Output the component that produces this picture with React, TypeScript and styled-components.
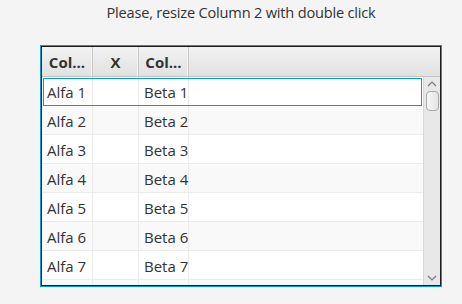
import styled, { createGlobalStyle } from "styled-components";

const Global = createGlobalStyle`
  html, body {
    margin: 0;
    padding: 0;
    background: #f4f4f4;
    font-family: "Open Sans", "Noto Sans", sans-serif;
    color: #333333;
  }
`;

const Page = styled.div`
  width: 462px;
  height: 304px;
  display: flex;
  flex-direction: column;
`;

const Title = styled.div`
  font-size: 14.6px;
  line-height: 20px;
  margin-top: 2px;
  padding-left: 20px;
  text-align: center;
  letter-spacing: -0.2px;
`;

const Table = styled.div`
  margin-top: 24px;
  margin-left: 41px;
  width: 398px;
  height: 238px;
  border: 1px solid #1c1c1c;
  box-shadow: 0 0 0 1px #039ed3;
  background: #ffffff;
  display: flex;
  flex-direction: column;
  overflow: hidden;
`;

const Header = styled.div`
  height: 29px;
  display: flex;
  border-bottom: 1px solid #c4c4c4;
  background: linear-gradient(#f2f2f2, #e1e1e1);
`;

const HeadCell = styled.div<{ $w: number }>`
  width: ${(p) => p.$w}px;
  flex: 0 0 auto;
  box-sizing: border-box;
  border-right: 1px solid #c8c8c8;
  box-shadow: inset -1px 0 0 #f4f4f4;
  display: flex;
  align-items: center;
  justify-content: center;
  font-weight: 700;
  font-size: 15px;
`;

const HeadFiller = styled.div`
  flex: 1;
`;

const Body = styled.div`
  flex: 1;
  display: flex;
  min-height: 0;
`;

const Rows = styled.div`
  width: 381px;
  overflow: hidden;
`;

const Row = styled.div<{ $odd: boolean; $focus: boolean }>`
  height: 28px;
  display: flex;
  position: relative;
  border-bottom: 1px solid #ececec;
  background: ${(p) => (p.$odd ? "#f9f9f9" : "#ffffff")};
  ${(p) =>
    p.$focus &&
    `&::after {
      content: "";
      position: absolute;
      left: 1px;
      top: 1px;
      right: 1px;
      bottom: -1px;
      border: 1px solid #039ed3;
      pointer-events: none;
    }`}
`;

const Cell = styled.div<{ $w: number }>`
  width: ${(p) => p.$w}px;
  flex: 0 0 auto;
  border-right: 1px solid #ececec;
  display: flex;
  align-items: center;
  padding-left: 5px;
  padding-top: 1px;
  box-sizing: border-box;
  font-size: 15px;
  white-space: nowrap;
`;

const ScrollBar = styled.div`
  width: 16px;
  border-left: 1px solid #d8d8d8;
  background: #e8e8e8;
  display: flex;
  flex-direction: column;
  align-items: center;
`;

const Arrow = styled.div`
  height: 14px;
  display: flex;
  align-items: center;
  justify-content: center;
`;

const Thumb = styled.div`
  width: 13px;
  height: 20px;
  border: 1px solid #a9a9a9;
  border-radius: 4px;
  background: linear-gradient(90deg, #f6f6f6, #e4e4e4);
  box-sizing: border-box;
`;

const Track = styled.div`
  flex: 1;
`;

const cols = [51, 46, 50];

const Chevron = ({ up }: { up: boolean }) => (
  <svg width="10" height="6" viewBox="0 0 10 6">
    <path
      d={up ? "M1 5 L5 1 L9 5" : "M1 1 L5 5 L9 1"}
      fill="none"
      stroke="#7a7a7a"
      strokeWidth="1.2"
    />
  </svg>
);

const rows = [1, 2, 3, 4, 5, 6, 7, 8];

export default function App() {
  return (
    <>
      <Global />
      <Page>
        <Title>Please, resize Column 2 with double click</Title>
        <Table>
          <Header>
            <HeadCell $w={cols[0]}>Col...</HeadCell>
            <HeadCell $w={cols[1]}>X</HeadCell>
            <HeadCell $w={cols[2]}>Col...</HeadCell>
            <HeadFiller />
          </Header>
          <Body>
            <Rows>
              {rows.map((n) => (
                <Row key={n} $odd={n % 2 === 0} $focus={n === 1}>
                  <Cell $w={cols[0]}>{n < 8 ? `Alfa ${n}` : ""}</Cell>
                  <Cell $w={cols[1]} />
                  <Cell $w={cols[2]}>{n < 8 ? `Beta ${n}` : ""}</Cell>
                </Row>
              ))}
            </Rows>
            <ScrollBar>
              <Arrow>
                <Chevron up />
              </Arrow>
              <Thumb />
              <Track />
              <Arrow>
                <Chevron up={false} />
              </Arrow>
            </ScrollBar>
          </Body>
        </Table>
      </Page>
    </>
  );
}
